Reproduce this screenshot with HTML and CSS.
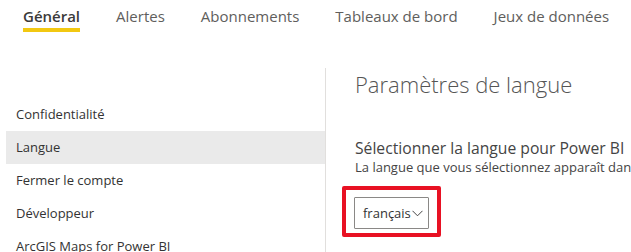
FILE: index.html
```html
<!DOCTYPE html>
<html lang="fr">
<head>
<meta charset="utf-8">
<link rel="stylesheet" href="styles.css">
</head>
<body>
<nav class="tabs">
  <div class="tab active">Général</div>
  <div class="tab">Alertes</div>
  <div class="tab">Abonnements</div>
  <div class="tab">Tableaux de bord</div>
  <div class="tab">Jeux de données</div>
</nav>
<main class="main">
  <aside class="sidebar">
    <div class="item">Confidentialité</div>
    <div class="item selected">Langue</div>
    <div class="item">Fermer le compte</div>
    <div class="item">Développeur</div>
    <div class="item">ArcGIS Maps for Power BI</div>
  </aside>
  <section class="content">
    <h1 class="title">Paramètres de langue</h1>
    <h2 class="subtitle">Sélectionner la langue pour Power BI</h2>
    <p class="desc">La langue que vous sélectionnez apparaît dans Power BI</p>
    <div class="highlight">
      <div class="select">
        <span>français</span>
        <svg class="chev" width="11" height="7" viewBox="0 0 11 7"><path d="M0.5 0.8 L5.5 5.8 L10.5 0.8" fill="none" stroke="#444" stroke-width="1"/></svg>
      </div>
    </div>
  </section>
</main>
</body>
</html>
```
FILE: styles.css
```css
html, body {
  margin: 0;
  padding: 0;
  background: #fff;
  overflow: hidden;
}
body {
  font-family: "Open Sans", "Noto Sans", sans-serif;
  color: #333;
  width: 631px;
  height: 252px;
}
.tabs {
  display: flex;
  gap: 36px;
  padding-left: 23px;
  height: 37px;
}
.tab {
  font-size: 15px;
  line-height: 20px;
  padding-top: 6px;
  color: #605e5c;
  height: 26px;
  box-sizing: content-box;
  white-space: nowrap;
}
.tab.active {
  color: #3b3a39;
  font-weight: 600;
  border-bottom: 4px solid #f2c811;
  height: 22px;
  padding-top: 6px;
}
.main {
  display: flex;
  margin-top: 31px;
  height: 184px;
  overflow: hidden;
}
.sidebar {
  flex: 0 0 319px;
  margin-left: 6px;
  padding-top: 30px;
  border-right: 1px solid #e1dfdd;
  overflow: hidden;
}
.item {
  height: 33px;
  line-height: 33px;
  padding-left: 10px;
  font-size: 13px;
  color: #333;
  white-space: nowrap;
}
.item.selected {
  background: #eaeaea;
}
.content {
  flex: 1 1 auto;
  min-width: 0;
  overflow: hidden;
  padding-left: 29px;
  white-space: nowrap;
}
.title {
  margin: 0;
  font-size: 22px;
  font-weight: 300;
  line-height: 32px;
  color: #555;
}
.subtitle {
  margin: 37px 0 0;
  font-size: 15.7px;
  font-weight: 400;
  line-height: 22px;
  color: #444;
}
.desc {
  margin: 0;
  font-size: 13px;
  line-height: 16px;
  color: #444;
}
.highlight {
  display: inline-block;
  margin: 11px 0 0 -13px;
  border: 4px solid #e81123;
  border-radius: 2px;
  padding: 7px 8px 4px 8px;
}
.select {
  display: flex;
  align-items: center;
  height: 30px;
  width: 65px;
  border: 1px solid #8a8886;
  border-radius: 1px;
  padding-left: 8px;
  font-size: 13px;
  color: #333;
  box-sizing: content-box;
}
.chev {
  margin-left: 1px;
  margin-top: 1px;
}
```
